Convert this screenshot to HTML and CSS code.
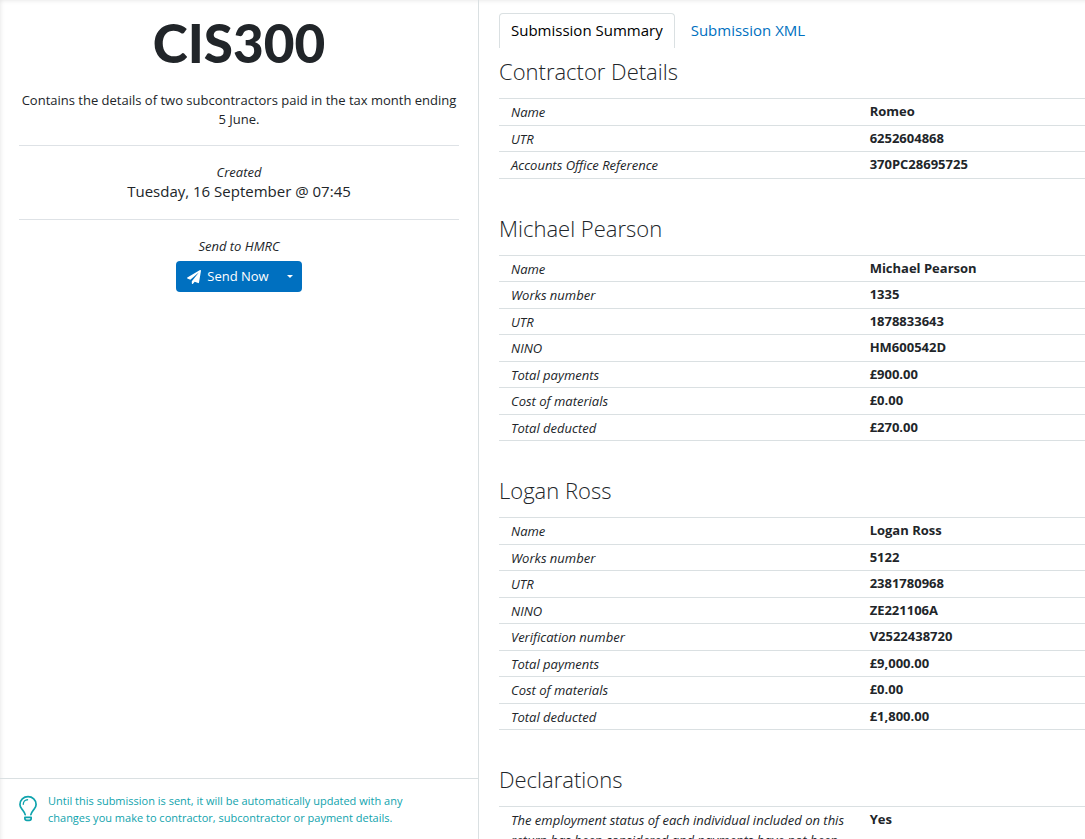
FILE: index.html
```html
<!DOCTYPE html>
<html lang="en">
<head>
<meta charset="utf-8">
<meta name="viewport" content="width=device-width, initial-scale=1">
<title>CIS300</title>
<link rel="stylesheet" href="styles.css">
</head>
<body>
<div class="layout">
  <aside class="side">
    <div class="side-main">
      <h1 class="title">CIS300</h1>
      <p class="intro">Contains the details of two subcontractors paid in the tax month ending 5 June.</p>
      <section class="block">
        <div class="caption">Created</div>
        <div class="date">Tuesday, 16 September @ 07:45</div>
      </section>
      <section class="block">
        <div class="caption">Send to HMRC</div>
        <div class="btn-group">
          <button class="btn btn-send" type="button">
            <svg class="plane" viewBox="0 0 512 512" aria-hidden="true"><path fill="currentColor" d="M476 3.2L12.500 270.600c-18.100 10.400-15.800 35.600 2.200 43.200L121 358.400l287.300-253.200c5.500-4.900 13.300 2.600 8.600 8.300L176 407v80.500c0 23.600 28.500 32.900 42.500 15.800L282 426l124.600 52.200c14.200 6 30.400-2.900 33-18.200l72-432C515 7.800 493.300-6.800 476 3.200z"/></svg>
            Send Now
          </button>
          <button class="btn btn-toggle" type="button" aria-label="More send options"><span class="caret"></span></button>
        </div>
      </section>
    </div>
    <footer class="note">
      <svg class="bulb" viewBox="0 0 20 28" fill="none" stroke="currentColor" stroke-width="1.800" stroke-linecap="round" stroke-linejoin="round" aria-hidden="true">
        <path d="M6.500 20C6 17.500 4.500 16 3 14 1.800 12.500 1 11 1 9.200 1 4.600 4.800 1 9.500 1S18 4.600 18 9.200c0 1.800-.8 3.300-2 4.800-1.500 2-3 3.500-3.500 6"/>
        <path stroke-width="1.400" d="M4.500 9C4.500 6.300 6.600 4.400 9 4.300"/>
        <path d="M6.200 22.800h6.600v1.200c0 1.300-1 2-2 2H8.200c-1 0-2-.7-2-2z"/>
      </svg>
      <p class="note-text">Until this submission is sent, it will be automatically updated with any changes you make to contractor, subcontractor or payment details.</p>
    </footer>
  </aside>
  <main class="content">
    <nav class="tabs">
      <a class="tab tab-active" href="#summary" aria-current="page">Submission Summary</a>
      <a class="tab" href="#xml">Submission XML</a>
    </nav>
    <section class="group" id="summary">
      <h2 class="heading">Contractor Details</h2>
      <table class="details">
        <tr><th scope="row">Name</th><td>Romeo</td></tr>
        <tr><th scope="row">UTR</th><td>6252604868</td></tr>
        <tr><th scope="row">Accounts Office Reference</th><td>370PC28695725</td></tr>
      </table>
    </section>
    <section class="group">
      <h2 class="heading">Michael Pearson</h2>
      <table class="details">
        <tr><th scope="row">Name</th><td>Michael Pearson</td></tr>
        <tr><th scope="row">Works number</th><td>1335</td></tr>
        <tr><th scope="row">UTR</th><td>1878833643</td></tr>
        <tr><th scope="row">NINO</th><td>HM600542D</td></tr>
        <tr><th scope="row">Total payments</th><td>£900.00</td></tr>
        <tr><th scope="row">Cost of materials</th><td>£0.00</td></tr>
        <tr><th scope="row">Total deducted</th><td>£270.00</td></tr>
      </table>
    </section>
    <section class="group">
      <h2 class="heading">Logan Ross</h2>
      <table class="details">
        <tr><th scope="row">Name</th><td>Logan Ross</td></tr>
        <tr><th scope="row">Works number</th><td>5122</td></tr>
        <tr><th scope="row">UTR</th><td>2381780968</td></tr>
        <tr><th scope="row">NINO</th><td>ZE221106A</td></tr>
        <tr><th scope="row">Verification number</th><td>V2522438720</td></tr>
        <tr><th scope="row">Total payments</th><td>£9,000.00</td></tr>
        <tr><th scope="row">Cost of materials</th><td>£0.00</td></tr>
        <tr><th scope="row">Total deducted</th><td>£1,800.00</td></tr>
      </table>
    </section>
    <section class="group">
      <h2 class="heading">Declarations</h2>
      <table class="details">
        <tr><th scope="row">The employment status of each individual included on this return has been considered and payments have not been made under contracts of employment</th><td>Yes</td></tr>
      </table>
    </section>
  </main>
</div>
</body>
</html>
```

FILE: styles.css
```css
* {
  box-sizing: border-box;
}

body {
  margin: 0;
  font-family: "Open Sans", "Noto Sans", sans-serif;
  font-size: 13px;
  line-height: 1.5;
  color: #212529;
  background: #fff;
}

.layout {
  display: grid;
  grid-template-columns: 479fr 606fr;
  height: 100vh;
  box-shadow: inset 5px 5px 5px -5px rgba(0, 0, 0, 0.12);
}

.side {
  display: flex;
  flex-direction: column;
  min-height: 0;
  border-right: 1px solid #dae0e2;
}

.side-main {
  flex: 1;
  padding: 11px 19px;
  text-align: center;
}

.title {
  margin: 0 0 17px;
  font-family: Lato, "Open Sans", sans-serif;
  font-size: 53px;
  font-weight: 900;
  line-height: 63px;
}

.intro {
  margin: 0 0 16px;
  line-height: 19px;
}

.block {
  padding: 17px 0 19px;
  border-top: 1px solid #dee2e6;
}

.caption {
  font-style: italic;
  line-height: 19px;
}

.date {
  font-size: 15px;
  line-height: 18px;
}

.btn-group {
  display: inline-flex;
  margin-top: 5px;
  border-radius: 4px;
  overflow: hidden;
}

.btn {
  display: flex;
  align-items: center;
  height: 31px;
  border: 0;
  font: inherit;
  font-weight: 500;
  color: #fff;
  background: #0070c0;
  cursor: pointer;
}

.btn-send {
  gap: 6px;
  padding: 0 8px 0 11px;
}

.btn-toggle {
  padding: 0 9px 0 10px;
}

.plane {
  width: 14px;
  height: 14px;
}

.caret {
  border: 3px solid transparent;
  border-top-color: currentColor;
  border-bottom: 0;
}

.note {
  display: flex;
  align-items: center;
  gap: 10px;
  padding: 13px 19px;
  border-top: 1px solid #dae0e2;
  color: #0fa3ad;
}

.bulb {
  flex: none;
  width: 19px;
  height: 28px;
  overflow: visible;
}

.note-text {
  margin: 0;
  max-width: 380px;
  font-size: 11px;
  line-height: 17px;
}

.content {
  min-height: 0;
  padding: 13px 0 0 20px;
  overflow-y: auto;
  scrollbar-width: none;
}

.tabs {
  display: flex;
}

.tab {
  padding: 5px 15px 7px;
  border: 1px solid transparent;
  border-bottom: 0;
  font-size: 15px;
  line-height: 22px;
  color: #0070c0;
  text-decoration: none;
}

.tab-active {
  padding: 5px 11px 7px;
  border-color: #dae0e2;
  border-radius: 4px 4px 0 0;
  color: #000;
}

.group {
  padding: 10px 0 26px;
}

.heading {
  margin: 0 0 13px;
  font-size: 22px;
  font-weight: 300;
  line-height: 27px;
}

.details {
  width: 100%;
  table-layout: fixed;
  border-spacing: 0;
  border-bottom: 1px solid #dae0e2;
}

.details th,
.details td {
  padding: 3px 12px;
  border-top: 1px solid #dae0e2;
  text-align: left;
  vertical-align: top;
}

.details th {
  width: 61.2%;
  padding: 4px 12px 2px;
  font-weight: 400;
  font-style: italic;
}

.details td {
  font-weight: 700;
}
```
